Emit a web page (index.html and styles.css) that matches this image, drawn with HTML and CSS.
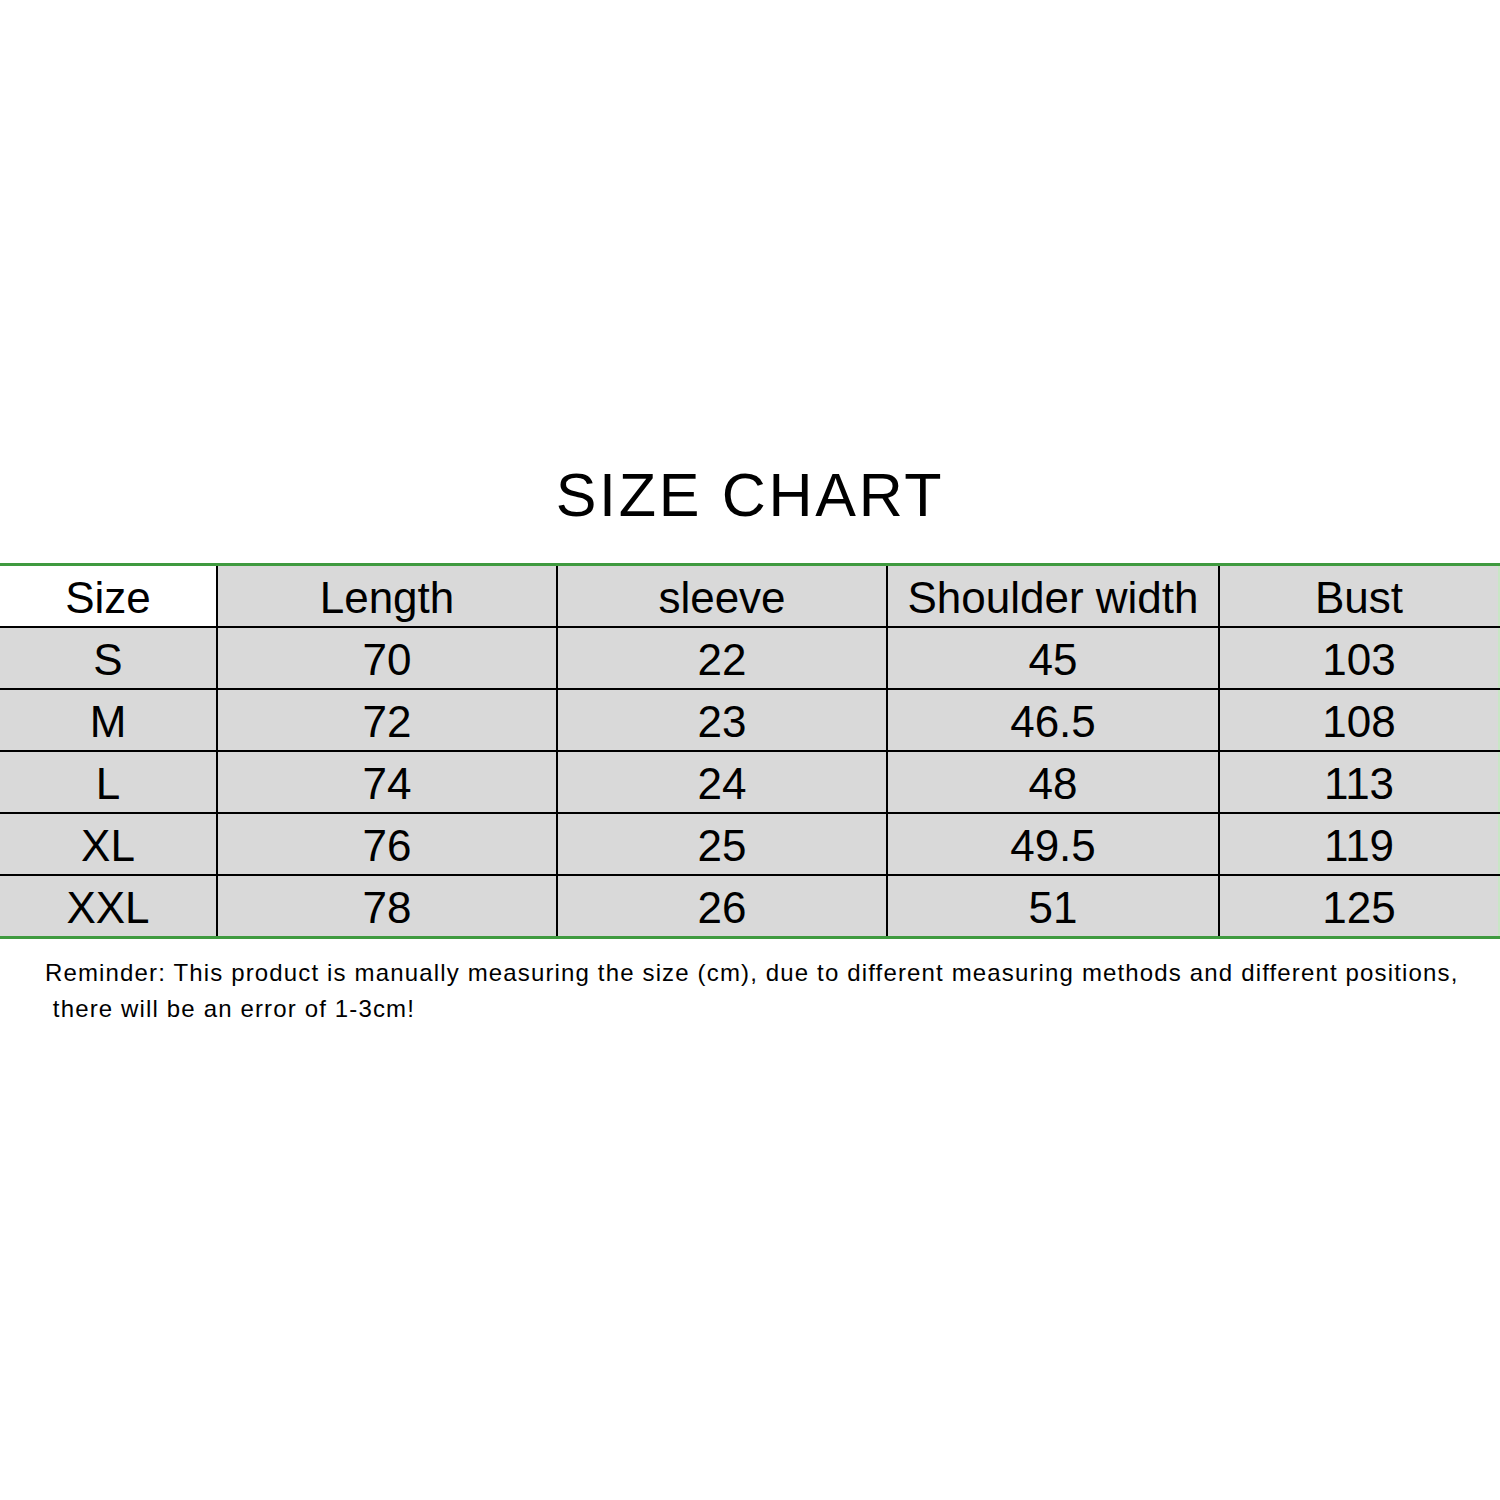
FILE: index.html
```html
<!DOCTYPE html>
<html>
<head>
<meta charset="utf-8">
<link rel="stylesheet" href="styles.css">
</head>
<body>
<div class="page">
  <h1 class="title">SIZE CHART</h1>
  <div class="chart">
    <div class="row head">
      <div class="cell first white">Size</div>
      <div class="cell">Length</div>
      <div class="cell">sleeve</div>
      <div class="cell">Shoulder width</div>
      <div class="cell last">Bust</div>
    </div>
    <div class="row">
      <div class="cell first">S</div><div class="cell">70</div><div class="cell">22</div><div class="cell">45</div><div class="cell last">103</div>
    </div>
    <div class="row">
      <div class="cell first">M</div><div class="cell">72</div><div class="cell">23</div><div class="cell">46.5</div><div class="cell last">108</div>
    </div>
    <div class="row">
      <div class="cell first">L</div><div class="cell">74</div><div class="cell">24</div><div class="cell">48</div><div class="cell last">113</div>
    </div>
    <div class="row">
      <div class="cell first">XL</div><div class="cell">76</div><div class="cell">25</div><div class="cell">49.5</div><div class="cell last">119</div>
    </div>
    <div class="row end">
      <div class="cell first">XXL</div><div class="cell">78</div><div class="cell">26</div><div class="cell">51</div><div class="cell last">125</div>
    </div>
  </div>
  <p class="note">Reminder: This product is manually measuring the size (cm), due to different measuring methods and different positions,<br>&nbsp;there will be an error of 1-3cm!</p>
</div>
</body>
</html>
```

FILE: styles.css
```css
html, body {
  margin: 0;
  padding: 0;
  background: #ffffff;
}
body {
  width: 1500px;
  height: 1500px;
  font-family: "Liberation Sans", Arial, sans-serif;
  color: #000;
}
.page {
  padding-top: 460px;
}
.title {
  margin: 0;
  font-weight: normal;
  font-size: 61px;
  letter-spacing: 2.7px;
  line-height: 70px;
  text-align: center;
  height: 103px;
}
.chart {
  width: 1500px;
  border-top: 3px solid #3f9a3f;
  border-bottom: 3px solid #3f9a3f;
}
.row {
  display: grid;
  grid-template-columns: 218px 340px 330px 332px 280px;
  height: 60px;
  border-bottom: 2px solid #000;
}
.row.end {
  border-bottom: none;
}
.cell {
  display: flex;
  align-items: center;
  justify-content: center;
  padding-top: 4px;
  background: #d9d9d9;
  font-size: 44px;
  border-right: 2px solid #000;
}
.cell.white {
  background: #ffffff;
}
.cell.last {
  border-right: 2px solid #c9e6c6;
}
.note {
  margin: 16px 0 0 45px;
  font-size: 24px;
  letter-spacing: 1.15px;
  line-height: 36px;
}
```
